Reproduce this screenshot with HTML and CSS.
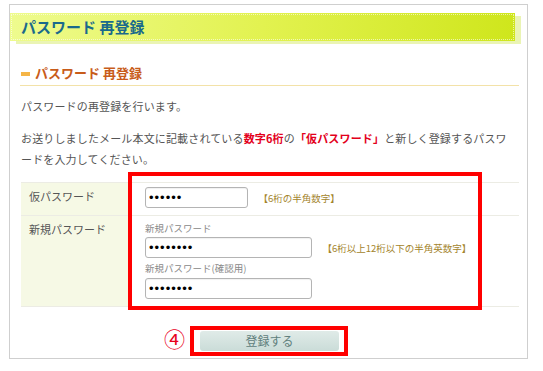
FILE: index.html
```html
<!DOCTYPE html>
<html lang="ja">
<head>
    <meta charset="UTF-8">
    <title>パスワード 再登録</title>
    <link rel="stylesheet" href="styles.css">
</head>
<body>
    <div class="panel">
        <h2 class="page-title">パスワード 再登録</h2>
        <div class="content">
            <h3 class="section-title"><span class="marker"></span>パスワード 再登録</h3>
            <p>パスワードの再登録を行います。</p>
            <p>お送りしましたメール本文に記載されている<strong>数字6桁</strong>の<strong>「仮パスワード」</strong>と新しく登録するパスワードを入力してください。</p>

            <div class="form-area">
                <table class="form-table">
                    <tr>
                        <th>仮パスワード</th>
                        <td>
                            <input type="password" class="pw short" value="123456">
                            <span class="note">【6桁の半角数字】</span>
                        </td>
                    </tr>
                    <tr>
                        <th>新規パスワード</th>
                        <td>
                            <div class="field-label">新規パスワード</div>
                            <input type="password" class="pw" value="12345678">
                            <span class="note">【6桁以上12桁以下の半角英数字】</span>
                            <div class="field-label second">新規パスワード(確認用)</div>
                            <input type="password" class="pw" value="12345678">
                        </td>
                    </tr>
                </table>
                <div class="mark-box"></div>
            </div>

            <div class="actions">
                <span class="btn-mark">
                    <span class="step">④</span>
                    <button type="submit" class="submit-btn">登録する</button>
                </span>
            </div>
        </div>
    </div>
</body>
</html>
```

FILE: styles.css
```css
body {
    margin: 0;
    padding: 0;
    background: #fff;
    font-family: "Noto Sans CJK JP", "Noto Sans", sans-serif;
    color: #555;
}

.panel {
    margin: 4px 0 0 9px;
    width: 517px;
    border: 1px solid #cfcfcf;
    padding: 0 0 2px 0;
}

.page-title {
    margin: 8px 12px 0 0;
    height: 28px;
    padding-left: 11px;
    font-size: 15px;
    line-height: 28px;
    font-weight: bold;
    color: #1a6a8c;
    background: linear-gradient(to right, #eefb8e, #e2f250 50%, #cfe61c);
    box-shadow: 6px 3px 0 #eaf4b4;
    outline: 1px dotted rgba(255, 255, 255, 0.6);
    outline-offset: -2px;
}

.content {
    padding: 0 8px 0 11px;
}

.section-title {
    margin: 23px 0 0 -1px;
    padding: 0 0 3px 1px;
    font-size: 13px;
    line-height: 18px;
    font-weight: bold;
    color: #c85c1a;
    border-bottom: 1px solid #f3e2a8;
    display: flex;
    align-items: center;
}

.marker {
    display: inline-block;
    width: 9px;
    height: 4px;
    background: #f5b547;
    margin-right: 5px;
    margin-top: 1px;
}

p {
    margin: 10px 8px 0 0;
    font-size: 11px;
    line-height: 21px;
    letter-spacing: 0.15px;
}

p + p {
    margin-top: 11px;
}

p strong {
    color: #e3001b;
}

.form-area {
    position: relative;
    margin-top: 12px;
}

.form-table {
    width: 498px;
    border-collapse: collapse;
}

.form-table th,
.form-table td {
    border-top: 1px solid #ececE4;
    border-bottom: 1px solid #ecece4;
    vertical-align: top;
    text-align: left;
}

.form-table th {
    width: 91px;
    padding: 4px 8px;
    background: #f6f9e5;
    font-size: 11px;
    line-height: 18px;
    font-weight: normal;
    color: #555;
}

.form-table td {
    padding: 4px 10px 7px 17px;
    font-size: 11px;
}

.pw {
    box-sizing: border-box;
    width: 167px;
    height: 21px;
    padding: 0 3px;
    border: 1px solid #b4b4b4;
    border-radius: 3px;
    font-family: "Liberation Sans", sans-serif;
    font-size: 13px;
    letter-spacing: 1px;
    color: #000;
    vertical-align: middle;
    box-shadow: inset 0 1px 1px rgba(0, 0, 0, 0.06);
}

.pw.short {
    width: 103px;
}

.note {
    margin-left: 8px;
    font-size: 9.5px;
    color: #a3842c;
    vertical-align: middle;
}

.field-label {
    font-size: 9.5px;
    line-height: 16px;
    color: #888;
    margin-bottom: 1px;
}

.field-label.second {
    margin-top: 2px;
    margin-bottom: 2px;
}

.mark-box {
    position: absolute;
    left: 107px;
    top: -10px;
    width: 346px;
    height: 130px;
    border: 4px solid #f00;
    pointer-events: none;
}

.actions {
    margin-top: 19px;
    text-align: center;
    padding-right: 2px;
}

.btn-mark {
    position: relative;
    display: inline-block;
    border: 4px solid #f00;
    padding: 1px 5px 1px 6px;
    line-height: 0;
}

.step {
    position: absolute;
    left: -30px;
    top: -4px;
    font-size: 21px;
    line-height: 24px;
    color: #e8001c;
}

.submit-btn {
    width: 139px;
    height: 20px;
    border: none;
    border-radius: 3px;
    background: linear-gradient(#e0ebe8, #cadcd8);
    font-family: "Noto Sans CJK JP", sans-serif;
    font-size: 12px;
    line-height: 20px;
    padding: 0;
    color: #5f807c;
    cursor: pointer;
}
```
